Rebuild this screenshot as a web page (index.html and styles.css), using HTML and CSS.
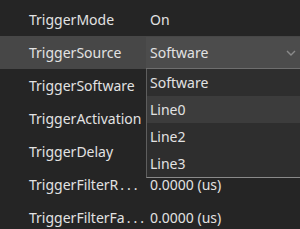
FILE: index.html
```html
<!DOCTYPE html>
<html lang="en">
<head>
  <meta charset="UTF-8">
  <title>Trigger Settings</title>
  <link rel="stylesheet" href="styles.css">
</head>
<body>
  <div class="props">
    <div class="row">
      <div class="name">TriggerMode</div>
      <div class="value">On</div>
    </div>
    <div class="row selected">
      <div class="name">TriggerSource</div>
      <div class="value combo">
        <span>Software</span>
        <svg class="chevron" width="10" height="6" viewBox="0 0 10 6">
          <path d="M1 1 L5 5 L9 1" fill="none" stroke="#8a8a8a" stroke-width="1.4"/>
        </svg>
      </div>
      <div class="popup">
        <div class="item">Software</div>
        <div class="item hover">Line0</div>
        <div class="item">Line2</div>
        <div class="item">Line3</div>
      </div>
    </div>
    <div class="row">
      <div class="name">TriggerSoftware</div>
      <div class="value"></div>
    </div>
    <div class="row">
      <div class="name">TriggerActivation</div>
      <div class="value"></div>
    </div>
    <div class="row">
      <div class="name">TriggerDelay</div>
      <div class="value"></div>
    </div>
    <div class="row">
      <div class="name" title="TriggerFilterRiseEdge">TriggerFilterR<span class="dots">...</span></div>
      <div class="value">0.0000 (us)</div>
    </div>
    <div class="row">
      <div class="name" title="TriggerFilterFallEdge">TriggerFilterFa<span class="dots">...</span></div>
      <div class="value">0.0000 (us)</div>
    </div>
  </div>
</body>
</html>
```

FILE: styles.css
```css
body {
  margin: 0;
  background: #252525;
  font-family: 'Noto Sans', sans-serif;
  font-size: 14px;
  color: #e2e2e2;
  overflow: hidden;
}
.props {
  padding-top: 3px;
}
.row {
  position: relative;
  display: flex;
  height: 33px;
  align-items: center;
}
.row.selected {
  background: #474747;
}
.name {
  width: 117px;
  padding-left: 29px;
  white-space: nowrap;
  overflow: hidden;
}
.dots {
  letter-spacing: 3px;
  margin-left: 2px;
}
.value {
  flex: 1;
  padding-left: 4px;
  white-space: nowrap;
}
.combo {
  align-self: stretch;
  margin-top: 1px;
  display: flex;
  align-items: center;
  justify-content: space-between;
  background: #4c4c4c;
  border-bottom: 1px solid #6e6e6e;
  padding-right: 4px;
}
.popup {
  position: absolute;
  left: 146px;
  top: 33px;
  right: 0;
  background: #2e2e2e;
  border-left: 1px solid #5e5e5e;
  border-bottom: 1px solid #8a8a8a;
  z-index: 2;
}
.item {
  height: 27px;
  line-height: 27px;
  padding-left: 3px;
}
.item.hover {
  background: #3c3c3c;
}
```
